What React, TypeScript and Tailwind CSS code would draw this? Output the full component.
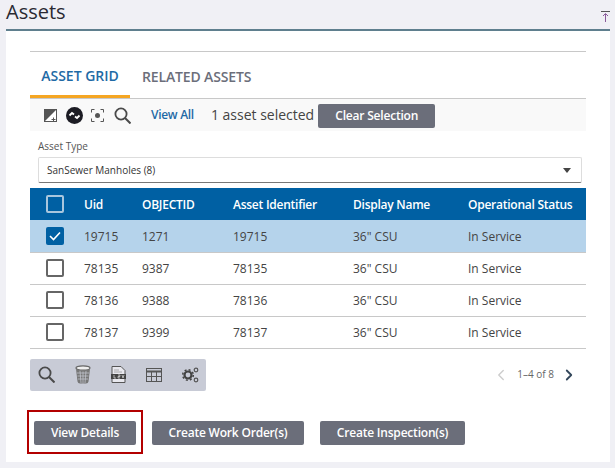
import { ChevronLeft, ChevronRight } from "lucide-react";

const font = { fontFamily: '"Open Sans", sans-serif' };

const rows = [
  { uid: "19715", objectId: "1271", identifier: "19715", selected: true },
  { uid: "78135", objectId: "9387", identifier: "78135", selected: false },
  { uid: "78136", objectId: "9388", identifier: "78136", selected: false },
  { uid: "78137", objectId: "9399", identifier: "78137", selected: false },
];

function ExposureIcon() {
  return (
    <svg width="13" height="13" viewBox="0 0 13 13">
      <rect x="0.5" y="0.5" width="12" height="12" fill="#fff" stroke="#555" />
      <path d="M0 13 13 0H0Z" fill="#555" />
      <path d="M7.500 10.500h4M9.500 8.500v4" stroke="#555" strokeWidth="1" />
    </svg>
  );
}

function LinkIcon() {
  return (
    <svg width="17" height="17" viewBox="0 0 17 17">
      <circle cx="8.5" cy="8.5" r="8.5" fill="#1c1c24" />
      <path d="M3.500 8.500 6 6l2 1.500M13.500 8.500 11 11 9 9.500" stroke="#fff" strokeWidth="1.800" fill="none" />
    </svg>
  );
}

function FocusIcon() {
  return (
    <svg width="13" height="13" viewBox="0 0 13 13" fill="none" stroke="#555">
      <path d="M.5 3.500v-3h3M9.500 .5h3v3M12.500 9.500v3h-3M3.500 12.500h-3v-3" />
      <circle cx="6.500" cy="6.500" r="2.500" fill="#555" stroke="none" />
    </svg>
  );
}

function SearchGlyph() {
  return (
    <svg width="17" height="17" viewBox="0 0 17 17" fill="none" stroke="#4a4a4a">
      <circle cx="7" cy="7" r="5.600" strokeWidth="1.800" />
      <path d="M11 11l5.500 5.500" strokeWidth="2" />
    </svg>
  );
}

function TrashIcon() {
  return (
    <svg width="16" height="19" viewBox="0 0 16 19">
      <ellipse cx="8" cy="3" rx="7" ry="2.200" fill="#eee" stroke="#666" strokeWidth="1.200" />
      <path d="M1 4 2.500 16.500q.3 2 2.500 2h6q2.200 0 2.500-2L15 4q-7 3-14 0Z" fill="#777" />
      <path d="M2 8h12M2.500 11h11M3 14h10M5 6l1 12M8 6.500V18.500M11 6l-1 12" stroke="#c8cbd6" strokeWidth="0.700" />
    </svg>
  );
}

function CsvIcon() {
  return (
    <svg width="15" height="17" viewBox="0 0 15 17">
      <path d="M1 .5h9l4 4v12H1Z" fill="#e8e8ee" stroke="#555" />
      <path d="M3 4h5M3 6h8" stroke="#999" strokeWidth="0.800" />
      <rect x="0" y="8" width="15" height="5" fill="#444" />
      <path d="M3 9v3h2M7 9h2v1.500H7V12h2M11 9l1 3 1-3" stroke="#fff" strokeWidth="0.600" fill="none" />
    </svg>
  );
}

function TableIcon() {
  return (
    <svg width="16" height="14" viewBox="0 0 16 14" fill="none" stroke="#555">
      <rect x="0.500" y="0.500" width="15" height="13" />
      <path d="M0 3.500h16" strokeWidth="2" />
      <path d="M0 8.500h16M5.500 3v11M10.500 3v11" />
    </svg>
  );
}

function GearsIcon() {
  return (
    <svg width="17" height="16" viewBox="0 0 17 16">
      <circle cx="6" cy="8" r="3.500" fill="none" stroke="#444" strokeWidth="2.200" />
      <circle cx="6" cy="8" r="5.300" fill="none" stroke="#444" strokeWidth="1.500" strokeDasharray="2 2.160" />
      <circle cx="14" cy="3" r="1.800" fill="none" stroke="#555" strokeWidth="1.200" />
      <circle cx="14" cy="13" r="1.800" fill="none" stroke="#555" strokeWidth="1.200" />
    </svg>
  );
}

function Checkbox({ checked, onDark }: { checked?: boolean; onDark?: boolean }) {
  if (checked) {
    return (
      <div className="w-[18px] h-[18px] rounded-[2px] bg-[#0060a3] flex items-center justify-center">
        <svg width="12" height="10" viewBox="0 0 12 10" fill="none" stroke="#fff" strokeWidth="1.600">
          <path d="M1 5l3.500 3.500L11 1.500" />
        </svg>
      </div>
    );
  }
  return (
    <div
      className={
        onDark
          ? "w-[18px] h-[18px] rounded-[2px] border-2 border-[#a9c6dd]"
          : "w-[18px] h-[18px] rounded-[2px] border-2 border-[#666]"
      }
    />
  );
}

function GrayButton({ label, width }: { label: string; width: string }) {
  return (
    <button className={`${width} h-6 rounded-[2px] bg-[#6b6e7a] text-white text-xs font-semibold tracking-[-0.2px]`}>
      {label}
    </button>
  );
}

export default function App() {
  return (
    <div className="w-[615px] h-[468px] overflow-hidden bg-[#f0f0f5] pl-1.5 pr-[5px] text-[#333]" style={font}>
      {/* Header */}
      <div className="h-[29px] flex items-start justify-between">
        <h1 className="text-[20px] leading-[24px] text-[#2a2a33]">Assets</h1>
        <svg className="mt-[11px]" width="9" height="11" viewBox="0 0 9 11" fill="none">
          <path d="M0 .5h9" stroke="#555" />
          <path d="M4.500 11V3M2 5l2.500-2.500L7 5" stroke="#8a5a9a" />
        </svg>
      </div>

      {/* Panel */}
      <div className="h-[433px] bg-white border-t-2 border-[#5f7f8e] pt-5 pl-6 pr-6">
        <div className="border-t border-[#c8c8c8]">
          {/* Tabs */}
          <div className="flex h-[47px] border-b border-[#c8c8c8]">
            <div className="w-[100px] h-[46px] border-b-[3px] border-[#f5a623] flex items-center justify-center pt-1 text-sm font-semibold text-[#1f6aa5]">
              ASSET GRID
            </div>
            <div className="ml-3 h-[46px] flex items-center pt-1 text-sm font-semibold text-[#6b6e7a] tracking-[-0.15px]">
              RELATED ASSETS
            </div>
          </div>

          {/* Grid toolbar */}
          <div className="h-8 bg-[#f9f9f9] flex items-center pl-3.5">
            <ExposureIcon />
            <div className="ml-[9px]"><LinkIcon /></div>
            <div className="ml-2"><FocusIcon /></div>
            <div className="ml-[10px]"><SearchGlyph /></div>
            <span className="ml-5 text-xs font-semibold text-[#1f6aa5] tracking-[-0.3px]">View All</span>
            <span className="ml-[17px] text-sm text-[#444]">1 asset selected</span>
            <div className="ml-1"><GrayButton label="Clear Selection" width="w-[117px]" /></div>
          </div>

          {/* Asset type */}
          <div className="pl-2 pr-1 pt-2">
            <div className="text-[10px] leading-[14px] text-[#555]">Asset Type</div>
            <div className="mt-1 h-[26px] border border-[#ddd] border-b-[#777] rounded-[2px] flex items-center justify-between pl-2 pr-[10px]">
              <span className="text-[10px] text-[#333]">SanSewer Manholes (8)</span>
              <div className="w-0 h-0 border-x-[4px] border-x-transparent border-t-[5px] border-t-[#444]" />
            </div>
          </div>

          {/* Table */}
          <table className="mt-[5px] w-[556px] table-fixed border-collapse text-xs">
            <thead>
              <tr className="h-8 bg-[#0060a3] text-white text-left tracking-[-0.25px]">
                <th className="w-[54px] pl-4"><Checkbox onDark /></th>
                <th className="w-[58px] pt-0.5 font-semibold">Uid</th>
                <th className="w-[91px] pt-0.5 font-semibold">OBJECTID</th>
                <th className="w-[120px] pt-0.5 font-semibold">Asset Identifier</th>
                <th className="w-[115px] pt-0.5 font-semibold">Display Name</th>
                <th className="pt-0.5 font-semibold">Operational Status</th>
              </tr>
            </thead>
            <tbody>
              {rows.map((row) => (
                <tr
                  key={row.uid}
                  className={
                    row.selected
                      ? "h-8 bg-[#b5d3eb] border-b border-[#c8c8c8] text-[#444]"
                      : "h-8 bg-white border-b border-[#c8c8c8] text-[#444]"
                  }
                >
                  <td className="pl-4"><Checkbox checked={row.selected} /></td>
                  <td className="pt-0.5">{row.uid}</td>
                  <td className="pt-0.5">{row.objectId}</td>
                  <td className="pt-0.5">{row.identifier}</td>
                  <td className="pt-0.5">36" CSU</td>
                  <td className="pt-0.5">In Service</td>
                </tr>
              ))}
            </tbody>
          </table>

          {/* Table footer */}
          <div className="mt-[10px] flex items-center justify-between">
            <div className="w-44 h-8 rounded-[2px] bg-[#c8cbd6] flex items-center pl-2 gap-5">
              <SearchGlyph />
              <TrashIcon />
              <CsvIcon />
              <TableIcon />
              <GearsIcon />
            </div>
            <div className="flex items-center pr-[8px] text-[10px] text-[#666]">
              <ChevronLeft className="w-[18px] h-[18px] text-[#ccc]" strokeWidth={1.800} />
              <span className="ml-[7px]">1–4 of 8</span>
              <ChevronRight className="ml-[6px] w-[18px] h-[18px] text-[#33475b]" strokeWidth={2.400} />
            </div>
          </div>

          {/* Actions */}
          <div className="mt-7 pl-1 flex">
            <div className="relative">
              <GrayButton label="View Details" width="w-[102px]" />
              <div className="absolute -left-[7px] -right-[7px] -top-[9px] -bottom-[9px] border-2 border-[#b30000]" />
            </div>
            <div className="ml-4"><GrayButton label="Create Work Order(s)" width="w-[152px]" /></div>
            <div className="ml-4"><GrayButton label="Create Inspection(s)" width="w-[145px]" /></div>
          </div>
        </div>
      </div>
    </div>
  );
}
